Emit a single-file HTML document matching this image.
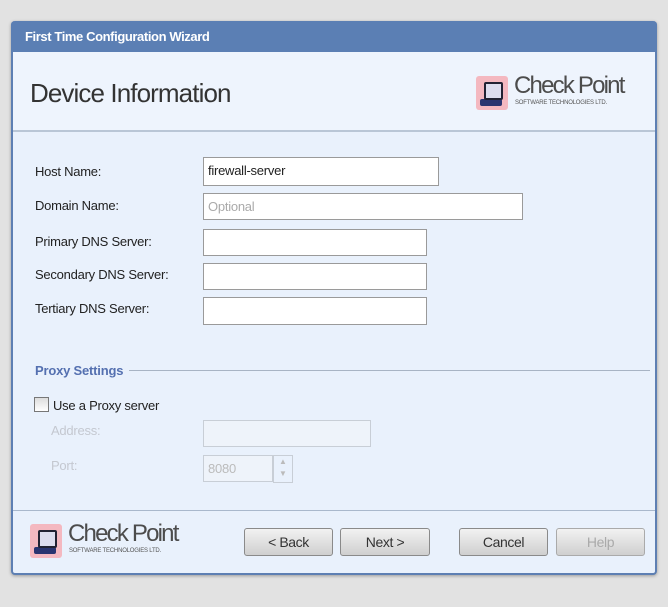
<!DOCTYPE html>
<html><head><style>
body{margin:0;width:668px;height:607px;background:#e2e2e2;font-family:"Liberation Sans",sans-serif;position:relative;overflow:hidden}
.a{position:absolute}
.win{left:11px;top:21px;width:642px;height:552px;border:2px solid #5d7fb3;border-top:none;border-radius:4px;background:#e9f1fc;box-shadow:0 1px 3px #999}
.title{left:11px;top:21px;width:646px;height:31px;background:#5b7fb4;border-radius:4px 4px 0 0;color:#fff;font-weight:bold;font-size:13px;line-height:31px;text-indent:14px;letter-spacing:-0.4px}
.hdr{left:13px;top:52px;width:642px;height:78px;background:#eef4fd;border-bottom:2px solid #b9c6d6}
.lbl{font-size:13px;color:#222;left:35px;letter-spacing:-0.25px}
.in{background:#fff;border:1px solid #9a9a9a;box-sizing:border-box;font-size:13px;padding-left:4px;line-height:26px;color:#222;letter-spacing:-0.25px}
.dis{background:#eef3fa;border:1px solid #c8ced6;color:#bbb}
.btn{top:528px;width:89px;height:28px;box-sizing:border-box;border:1px solid #8a8a8a;border-radius:3px;background:linear-gradient(#f2f2f2,#cfcfcf);font-size:14px;text-align:center;line-height:26px;color:#333;letter-spacing:-0.4px}
.logo .ic{position:absolute;left:0;top:0;width:32px;height:34px;background:#f4b8c0;border-radius:3px}
.logo .ic:after{content:"";position:absolute;left:8px;top:6px;width:15px;height:14px;border:2px solid #223;background:#dde;border-radius:2px}
.logo .ic:before{content:"";position:absolute;left:4px;top:23px;width:22px;height:7px;background:#2a3470;border-radius:2px}
.logo .t{position:absolute;left:38px;top:-4px;font-size:24px;color:#4c4c4c;letter-spacing:-1.8px;white-space:nowrap}
.logo .s{position:absolute;left:39px;top:24px;font-size:6px;color:#555;white-space:nowrap;letter-spacing:-0.2px}
</style></head><body>
<div class="a win"></div>
<div class="a title">First Time Configuration Wizard</div>
<div class="a hdr"></div>
<div class="a" style="left:30px;top:78px;font-size:26px;color:#333;letter-spacing:-0.9px">Device Information</div>
<div class="a logo" style="left:476px;top:76px"><div class="ic"></div><div class="t">Check Point</div><div class="s">SOFTWARE TECHNOLOGIES LTD.</div></div>

<div class="a lbl" style="top:164px">Host Name:</div>
<div class="a in" style="left:203px;top:157px;width:236px;height:29px">firewall-server</div>
<div class="a lbl" style="top:198px">Domain Name:</div>
<div class="a in" style="left:203px;top:193px;width:320px;height:27px;color:#aaa">Optional</div>
<div class="a lbl" style="top:234px">Primary DNS Server:</div>
<div class="a in" style="left:203px;top:229px;width:224px;height:27px"></div>
<div class="a lbl" style="top:267px">Secondary DNS Server:</div>
<div class="a in" style="left:203px;top:263px;width:224px;height:27px"></div>
<div class="a lbl" style="top:301px">Tertiary DNS Server:</div>
<div class="a in" style="left:203px;top:297px;width:224px;height:28px"></div>

<div class="a" style="left:35px;top:363px;font-size:13px;font-weight:bold;color:#5470b0;letter-spacing:-0.2px">Proxy Settings</div>
<div class="a" style="left:129px;top:370px;width:521px;height:1px;background:#a8b4c4"></div>
<div class="a" style="left:34px;top:397px;width:13px;height:13px;border:1px solid #777;background:linear-gradient(#ddd,#fff)"></div>
<div class="a lbl" style="left:53px;top:398px">Use a Proxy server</div>
<div class="a lbl" style="left:51px;top:423px;color:#c4c8d0">Address:</div>
<div class="a in dis" style="left:203px;top:420px;width:168px;height:27px"></div>
<div class="a lbl" style="left:51px;top:458px;color:#c4c8d0">Port:</div>
<div class="a in dis" style="left:203px;top:455px;width:70px;height:27px">8080</div>
<div class="a" style="left:273px;top:455px;width:18px;height:26px;border:1px solid #c8ced6;font-size:8px;color:#bbb;text-align:center;line-height:12px">▲<br>▼</div>

<div class="a" style="left:13px;top:510px;width:642px;height:1px;background:#a9b8cc"></div>
<div class="a logo" style="left:30px;top:524px"><div class="ic"></div><div class="t">Check Point</div><div class="s">SOFTWARE TECHNOLOGIES LTD.</div></div>
<div class="a btn" style="left:244px">&lt; Back</div>
<div class="a btn" style="left:340px;width:90px">Next &gt;</div>
<div class="a btn" style="left:459px">Cancel</div>
<div class="a btn" style="left:556px;color:#aaa;border-color:#aaa">Help</div>
</body></html>
